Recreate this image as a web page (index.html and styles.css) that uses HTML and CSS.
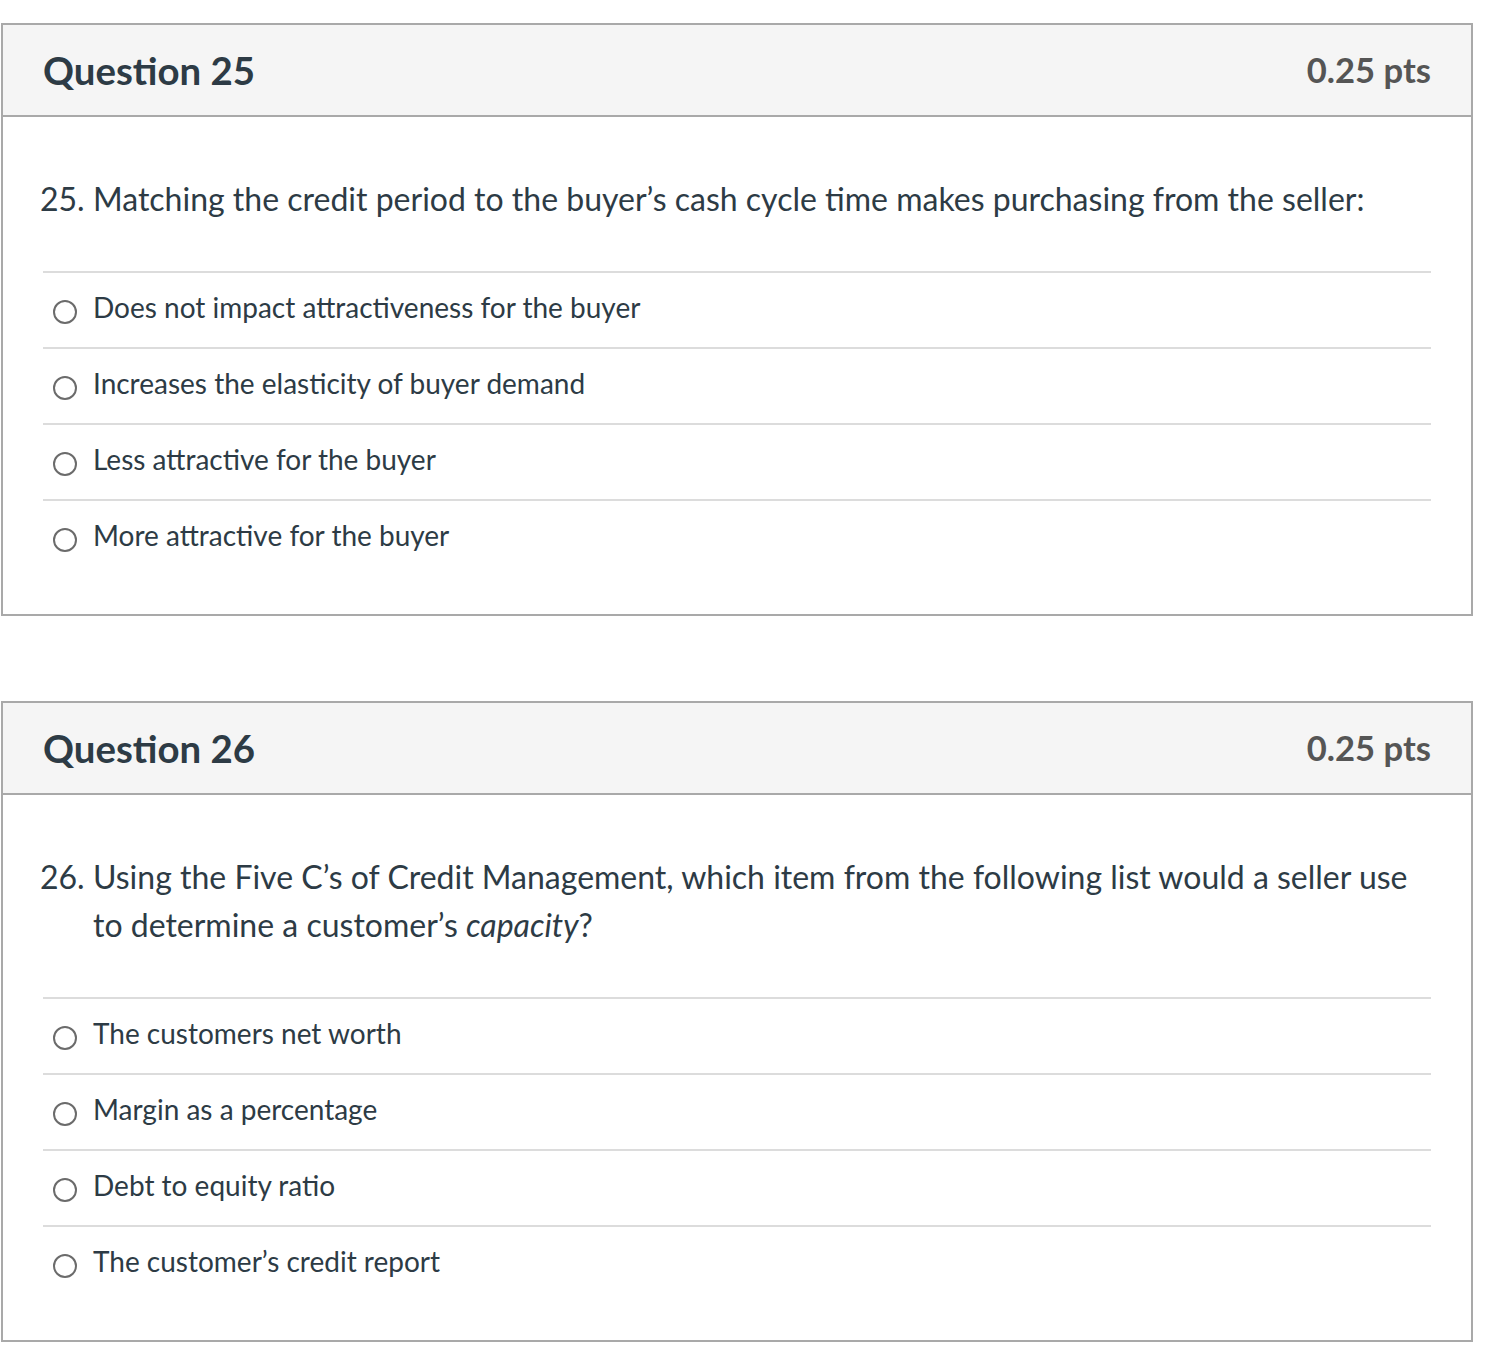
FILE: index.html
```html
<!DOCTYPE html>
<html lang="en">
<head>
<meta charset="utf-8">
<title>Quiz</title>
<link rel="stylesheet" href="styles.css">
</head>
<body>
<main class="page">
  <section class="question">
    <header class="q-header">
      <h2 class="q-title">Question 25</h2>
      <span class="q-points">0.25 pts</span>
    </header>
    <div class="q-body">
      <div class="q-text"><span class="q-num">25.</span><span class="q-words">Matching the credit period to the buyer’s cash cycle time makes purchasing from the seller:</span></div>
      <ul class="answers">
        <li class="answer"><span class="radio"></span><span class="label">Does not impact attractiveness for the buyer</span></li>
        <li class="answer"><span class="radio"></span><span class="label">Increases the elasticity of buyer demand</span></li>
        <li class="answer"><span class="radio"></span><span class="label">Less attractive for the buyer</span></li>
        <li class="answer"><span class="radio"></span><span class="label">More attractive for the buyer</span></li>
      </ul>
    </div>
  </section>

  <section class="question">
    <header class="q-header">
      <h2 class="q-title">Question 26</h2>
      <span class="q-points">0.25 pts</span>
    </header>
    <div class="q-body">
      <div class="q-text"><span class="q-num">26.</span><span class="q-words">Using the Five C’s of Credit Management, which item from the following list would a seller use to determine a customer’s <em>capacity</em>?</span></div>
      <ul class="answers">
        <li class="answer"><span class="radio"></span><span class="label">The customers net worth</span></li>
        <li class="answer"><span class="radio"></span><span class="label">Margin as a percentage</span></li>
        <li class="answer"><span class="radio"></span><span class="label">Debt to equity ratio</span></li>
        <li class="answer"><span class="radio"></span><span class="label">The customer’s credit report</span></li>
      </ul>
    </div>
  </section>
</main>
</body>
</html>
```

FILE: styles.css
```css
html, body {
  margin: 0;
  padding: 0;
  background: #fff;
}

body {
  font-family: Lato, "Open Sans", "Liberation Sans", sans-serif;
  color: #2d3b45;
}

.page {
  padding: 23px 0 0 1px;
  display: flex;
  flex-direction: column;
  gap: 85px;
}

.question {
  width: 1468px;
  border: 2px solid #a9a9a9;
  background: #fff;
}

.q-header {
  height: 90px;
  background: #f5f5f5;
  border-bottom: 2px solid #a9a9a9;
  display: flex;
  align-items: center;
  justify-content: space-between;
  padding: 0 40px 0 40px;
}

.q-title {
  margin: 0;
  font-size: 38.4px;
  font-weight: 700;
  color: #2d3b45;
  line-height: 1;
}

.q-points {
  font-size: 34.6px;
  font-weight: 700;
  color: #555;
  line-height: 1;
}

.q-body {
  padding: 58px 40px 39px 37px;
}

.q-text {
  display: flex;
  font-size: 32px;
  line-height: 48px;
  margin-bottom: 48px;
}

.q-num {
  flex: 0 0 auto;
  width: 53px;
}

.q-words em {
  font-style: italic;
}

.answers {
  list-style: none;
  margin: 0 0 0 3px;
  padding: 0;
}

.answer {
  display: flex;
  align-items: center;
  height: 74px;
  border-top: 2px solid #dcdcdc;
  font-size: 28px;
}

.radio {
  flex: 0 0 auto;
  width: 20px;
  height: 20px;
  border: 2px solid #6b6b6b;
  border-radius: 50%;
  margin: 4px 16px 0 10px;
  background: #fff;
}

.label {
  line-height: 1.2;
  padding-bottom: 5px;
}
```
